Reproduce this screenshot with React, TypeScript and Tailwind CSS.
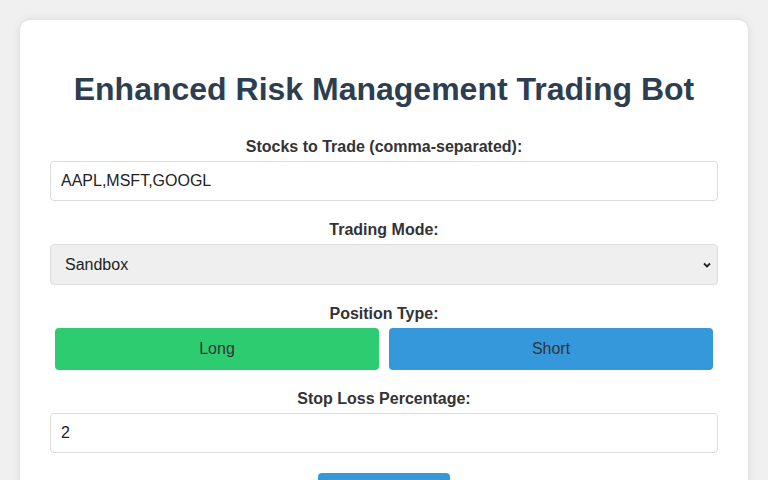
import React from "react";

export default function App() {
  return (
    <div className="min-h-screen bg-[#f0f0f0] p-5 font-['Liberation_Sans',Arial,sans-serif] text-[#333]">
      <div className="mx-auto w-[728px] rounded-[10px] bg-white p-[30px] shadow-[0_0_10px_rgba(0,0,0,0.1)]">
        <h1 className="mt-[21px] mb-[30px] text-center text-[32px] leading-[37px] font-bold text-[#2c3e50]">
          Enhanced Risk Management Trading Bot
        </h1>
        <div className="mb-5">
          <label className="mb-[5px] block text-center text-base leading-[18px] font-bold">
            Stocks to Trade (comma-separated):
          </label>
          <input
            type="text"
            defaultValue="AAPL,MSFT,GOOGL"
            className="block h-[40px] w-full rounded-[4px] border border-[#ddd] px-[10px] text-base text-[#222] outline-none"
          />
        </div>
        <div className="mb-5">
          <label className="mb-[5px] block text-center text-base leading-[18px] font-bold">
            Trading Mode:
          </label>
          <div className="relative">
            <select
              defaultValue="sandbox"
              className="block h-[41px] w-full appearance-none rounded-[4px] border border-[#ddd] bg-[#efefef] px-[14px] text-base text-[#222] outline-none"
            >
              <option value="sandbox">Sandbox</option>
              <option value="live">Live</option>
            </select>
            <svg
              className="pointer-events-none absolute top-1/2 right-[6px] -translate-y-1/2"
              width="10"
              height="10"
              viewBox="0 0 10 10"
            >
              <path d="M2 3.5 L5 6.5 L8 3.5" fill="none" stroke="#222" strokeWidth="1.8" />
            </svg>
          </div>
        </div>
        <div className="mb-5">
          <label className="mb-[5px] block text-center text-base leading-[18px] font-bold">
            Position Type:
          </label>
          <div className="flex gap-[10px] px-[5px]">
            <button className="h-[42px] flex-1 rounded-[4px] bg-[#2ecc71] text-base text-[#333]">
              Long
            </button>
            <button className="h-[42px] flex-1 rounded-[4px] bg-[#3498db] text-base text-[#333]">
              Short
            </button>
          </div>
        </div>
        <div className="mb-5">
          <label className="mb-[5px] block text-center text-base leading-[18px] font-bold">
            Stop Loss Percentage:
          </label>
          <input
            type="number"
            defaultValue="2"
            className="block h-[40px] w-full rounded-[4px] border border-[#ddd] px-[10px] text-base text-[#222] outline-none"
          />
        </div>
        <div className="flex justify-center">
          <button className="rounded-[4px] bg-[#3498db] px-5 py-[10px] text-base text-white">
            Start Trading
          </button>
        </div>
      </div>
    </div>
  );
}
